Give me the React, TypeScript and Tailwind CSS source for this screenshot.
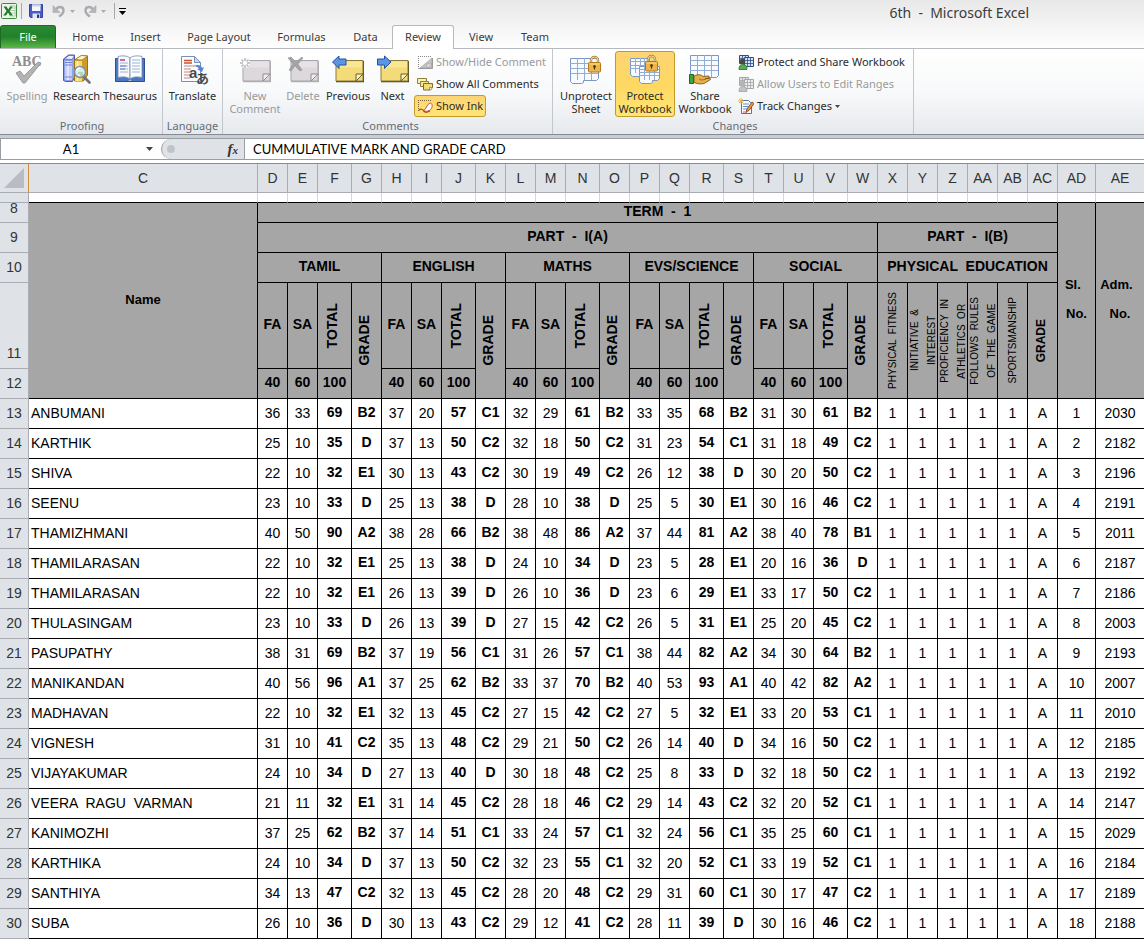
import React from 'react';

const BIG_TEXT = 'text-[11px] leading-[13px]';

// ---------- icons ----------

function ExcelLogo() {
  return (
    <svg width="16" height="16" viewBox="0 0 16 16">
      <rect x="0.5" y="0.5" width="15" height="15" rx="1" fill="#eaf5e6" stroke="#3c8a3f" />
      <path d="M9 3h5v10H9z" fill="#fff" stroke="#8fc08a" strokeWidth="0.7" />
      <path d="M10 5h4M10 7.500h4M10 10h4" stroke="#8fc08a" strokeWidth="0.8" />
      <path d="M2.500 3.500h3l1.800 3 1.900-3h2.600L8.600 8l3.400 4.600H9L7 9.400l-2 3.200H2.200L5.600 8z" fill="#1f7a2c" />
    </svg>
  );
}

function SaveIcon() {
  return (
    <svg width="16" height="16" viewBox="0 0 16 16">
      <path d="M1.500 1.500h13v13h-12l-1-1z" fill="#4a5cc4" stroke="#34439c" />
      <path d="M4 1.500h8.500V8H4z" fill="#f4f6fc" />
      <path d="M4 1.500h8.500v2H4z" fill="#c9d2f0" />
      <path d="M4.500 10.500h7.500V15H4.500z" fill="#dfe4f2" />
      <path d="M9 11.500h2.200V15H9z" fill="#2c3a8c" />
    </svg>
  );
}

function UndoIcon({ flip = false }: { flip?: boolean }) {
  return (
    <svg width="14" height="14" viewBox="0 0 14 14" className={flip ? '-scale-x-100' : ''}>
      <path d="M4 5.500C6 2 11.500 2 11.500 6.500c0 2.500-2 4.500-4.500 6" fill="none" stroke="#a9abaf" strokeWidth="2.400" />
      <path d="M1 1.500v7h7z" fill="#b4b6ba" stroke="#a0a2a6" strokeWidth="0.500" />
    </svg>
  );
}

function Caret({ className = 'text-[#444]' }: { className?: string }) {
  return (
    <svg width="7" height="4" viewBox="0 0 7 4" className={className}>
      <path d="M0 0h7L3.500 4z" fill="currentColor" />
    </svg>
  );
}

function SpellingIcon() {
  return (
    <svg width="32" height="32" viewBox="0 0 32 32">
      <text x="1" y="12" fontFamily="Liberation Serif, serif" fontWeight="bold" fontSize="14" fill="#8e8e8e">ABC</text>
      <path d="M5 19l4-2 4 5L27 8l3 1-16 20h-2z" fill="#b3b3b3" stroke="#8d8d8d" strokeWidth="0.8" />
    </svg>
  );
}

function ResearchIcon() {
  return (
    <svg width="32" height="32" viewBox="0 0 32 32">
      <path d="M2.500 5l5-4h6v22l-2 4.500h-7l-2-1z" fill="#8fa2ea" stroke="#4a5bb0" />
      <path d="M4 7h7v19H5l-1-1z" fill="#c5cff8" />
      <path d="M7 7v19" stroke="#e9edfd" strokeWidth="1.500" />
      <path d="M4 8.500h7M4 11h7M4 23h7" stroke="#5d6fc4" strokeWidth="0.8" />
      <path d="M3 5l5-3.500h5.500L11 5.500z" fill="#f2f4fd" stroke="#4a5bb0" strokeWidth="0.7" />
      <path d="M13.500 6l7-4.500 6 0.500v19l-4 6h-9z" fill="#cf9c25" stroke="#9a7218" />
      <path d="M14 7h7v20h-7z" fill="#f6d873" />
      <path d="M16.500 7v20" stroke="#fdf0b8" strokeWidth="1.500" />
      <path d="M14 5.500l6.500-4 6 0.500-5.500 4z" fill="#fff6d2" stroke="#9a7218" strokeWidth="0.7" />
      <path d="M22.500 22.500l6 6" stroke="#6f7379" strokeWidth="2.600" strokeLinecap="round" />
      <circle cx="19" cy="18" r="5.500" fill="#d8ecf6" stroke="#7d929e" strokeWidth="1.500" />
      <path d="M15.500 17a4 4 0 0 1 3.500-3" stroke="#fff" strokeWidth="1.500" fill="none" />
      <path d="M17 19h5M19 21h3" stroke="#8fbf7a" strokeWidth="1" />
    </svg>
  );
}

function ThesaurusIcon() {
  return (
    <svg width="32" height="32" viewBox="0 0 32 32">
      <path d="M1.500 4.500h29v23h-29z" fill="#4a78c4" stroke="#2b4f92" />
      <path d="M4 2.500c4-1 9-1 12 1.500v21c-3-2.500-8-2.500-12-1.500z" fill="#f7f9fd" stroke="#7287ad" strokeWidth="0.8" />
      <path d="M28 2.500c-4-1-9-1-12 1.500v21c3-2.500 8-2.500 12-1.500z" fill="#fdfefe" stroke="#7287ad" strokeWidth="0.8" />
      <path d="M6 6h5" stroke="#c2347c" strokeWidth="1.500" />
      <path d="M6 9h8M6 12h8M6 15h8M6 18h8M18 6h8M18 9h8M18 12h8M18 15h8M18 18h8" stroke="#9db0d6" strokeWidth="1" />
      <path d="M6 12h6M6 15h5" stroke="#5e7cbc" strokeWidth="1" />
      <path d="M13 27l3-2 3 2z" fill="#dfe6f3" stroke="#2b4f92" strokeWidth="0.6" />
    </svg>
  );
}

function TranslateIcon() {
  return (
    <svg width="32" height="32" viewBox="0 0 32 32">
      <path d="M4.500 2.500h13l6 6v19h-19z" fill="#fbfcff" stroke="#7c8db8" />
      <path d="M17.500 2.500v6h6z" fill="#cdd8f0" stroke="#7c8db8" />
      <path d="M7 6.500h8M7 9h8" stroke="#c9512c" strokeWidth="1.500" />
      <path d="M7 12h11M7 15h7M7 18h6M7 21h6M7 24h6" stroke="#c28a79" strokeWidth="1" />
      <path d="M17 12c4-2 7-1 8 2l2-1-2 5-5-3 2-0.500c-1-1.500-2-2-5-2.500z" fill="#4f82d8" />
      <text x="12" y="24" fontFamily="Liberation Sans, sans-serif" fontWeight="bold" fontSize="15" fill="#4b4b4b">a</text>
      <text x="19" y="29" fontFamily="Noto Sans CJK JP, sans-serif" fontWeight="bold" fontSize="13" fill="#4b4b4b">あ</text>
    </svg>
  );
}

type NoteKind = 'new' | 'delete' | 'previous' | 'next';

function NoteIcon({ kind }: { kind: NoteKind }) {
  const muted = kind === 'new' || kind === 'delete';
  return (
    <svg width="32" height="32" viewBox="0 0 32 32">
      <path d="M4 27.500h27.500V7" fill="none" stroke={muted ? '#b5b2b5' : '#403a20'} strokeWidth="1.500" />
      <path d="M4 6.500h27v20.500H4z" fill={muted ? '#dcd8dc' : '#f3dc78'} stroke={muted ? '#a9a6a9' : '#8b7a35'} />
      <path d="M5 7.500h25v6H5z" fill={muted ? '#e6e3e6' : '#f9e796'} />
      <path d="M24 27v-7h7z" fill={muted ? '#f1eff1' : '#fbf2c0'} stroke={muted ? '#8f8d8f' : '#6b5e2a'} />
      {kind === 'new' && (
        <>
          <circle cx="6" cy="9" r="5" fill="#fff" />
          <path d="M6 4v3M6 11v3M1 9h3M8 9h3M2.500 5.500l2 2M9.500 5.500l-2 2M2.500 12.500l2-2M9.500 12.500l-2-2" stroke="#b7b7b7" strokeWidth="1.500" />
        </>
      )}
      {kind === 'delete' && (
        <path d="M1 4l3-1 5 5 6-5 1 1-5 6 4 6-2 1-5-5-4 5-2-1 4-6z" fill="#a3a3a3" stroke="#8c8c8c" strokeWidth="0.5" />
      )}
      {kind === 'previous' && (
        <path d="M0.500 8L7 2v3h7v6H7v3.500z" fill="#5c94e6" stroke="#24529c" />
      )}
      {kind === 'next' && (
        <path d="M14 8L7.500 2v3h-7v6h7v3.500z" fill="#5c94e6" stroke="#24529c" />
      )}
    </svg>
  );
}

function ShowHideIcon() {
  return (
    <svg width="16" height="14" viewBox="0 0 16 14">
      <path d="M1 1.500h14M1.500 1v12" stroke="#8a8a8a" strokeDasharray="1 1" />
      <path d="M3 13L15 3v10z" fill="#c4c4c4" stroke="#9a9a9a" strokeWidth="0.6" />
      <path d="M10 13v-4h5z" fill="#ededed" stroke="#9a9a9a" strokeWidth="0.6" />
      <path d="M1 13.500h14.500V3" stroke="#888" fill="none" strokeWidth="0.8" />
    </svg>
  );
}

function ShowAllIcon() {
  return (
    <svg width="16" height="14" viewBox="0 0 16 14">
      <path d="M0.500 1.500h9v5h-9z" fill="#fbf0b0" stroke="#8f7e3c" />
      <path d="M3.500 4.500h8v5h-8z" fill="#f8e690" stroke="#8f7e3c" />
      <path d="M6.500 6.500h9v4l-2 2.500h-7z" fill="#f3dc78" stroke="#7d6c2c" />
      <path d="M12.500 13v-2.500h3" fill="#fff" stroke="#7d6c2c" strokeWidth="0.7" />
    </svg>
  );
}

function InkIcon() {
  return (
    <svg width="16" height="14" viewBox="0 0 16 14">
      <path d="M1 1.500h14M1.500 1v12" stroke="#7a6530" strokeDasharray="1 1" />
      <path d="M6 12c3-1 4-7 7-8 2.500 0 3 4 0.500 6.500C12 12.500 9 12.500 6 12z" fill="#fff" stroke="#c8553a" strokeWidth="1" />
      <path d="M2 11.500c1-2 4-1.500 5 0.500s4 1.500 6-0.500" stroke="#c0392b" fill="none" strokeWidth="1.200" />
    </svg>
  );
}

function SheetGrid({ x, y, w = 28, h = 20 }: { x: number; y: number; w?: number; h?: number }) {
  const cols = [1, 2, 3].map((i) => x + Math.round((w * i) / 4) + 0.5);
  const rows = [1, 2, 3].map((i) => y + Math.round((h * i) / 4) + 0.5);
  return (
    <g>
      <path
        d={`M${x + 0.5} ${y + 0.5}h${w}v${h}l-2 2h-${w - 15}v2l-2 1h-9l-2-2z`}
        fill="#f7faff"
        stroke="#7c96c4"
      />
      {cols.map((c) => (
        <path key={c} d={`M${c} ${y}v${h + 2}`} stroke="#93acd6" />
      ))}
      {rows.map((r) => (
        <path key={r} d={`M${x} ${r}h${w}`} stroke="#93acd6" />
      ))}
    </g>
  );
}

function Lock({ x, y }: { x: number; y: number }) {
  return (
    <g transform={`translate(${x} ${y})`}>
      <path d="M3 7V4.500a3.500 3.500 0 0 1 7 0V7" fill="none" stroke="#a8823a" strokeWidth="2.400" />
      <path d="M3 7V4.500a3.500 3.500 0 0 1 7 0V7" fill="none" stroke="#f4dfa2" strokeWidth="1" />
      <rect x="0.5" y="6.500" width="12" height="9.500" rx="1" fill="#eeb548" stroke="#b07a1c" />
      <path d="M1.500 8h10" stroke="#fbdc90" />
      <path d="M6.500 9.500v4" stroke="#4a3208" strokeWidth="1.200" />
      <circle cx="6.500" cy="10.500" r="1.300" fill="#4a3208" />
    </g>
  );
}

function UnprotectIcon() {
  return (
    <svg width="32" height="32" viewBox="0 0 32 32">
      <SheetGrid x={0} y={4} />
      <Lock x={18} y={2} />
    </svg>
  );
}

function ProtectIcon() {
  return (
    <svg width="32" height="32" viewBox="0 0 32 32">
      <SheetGrid x={1} y={4} w={19} h={13} />
      <SheetGrid x={10} y={12} w={20} h={12} />
      <Lock x={16} y={1} />
    </svg>
  );
}

function ShareIcon() {
  return (
    <svg width="32" height="32" viewBox="0 0 32 32">
      <SheetGrid x={1} y={1} w={28} h={20} />
      <path d="M0.500 20.500h4v9h-4z" fill="#3fa53a" stroke="#1f6d1c" />
      <path d="M5 22c4-2 7-1.500 9 0.500l5-0.500c2 0 1.500 2 0 2.200l-3 0.500 5-0.500c1 0.500 0.500 1.800-1 2.300L15 29.500c-4 1-7 0-10-1z" fill="#e5b04c" stroke="#85570f" strokeWidth="0.9" />
      <path d="M10 25c2 1.500 4 1 7 0" stroke="#85570f" strokeWidth="0.7" fill="none" />
    </svg>
  );
}

function ProtectShareIcon({ muted = false }: { muted?: boolean }) {
  const line = muted ? '#a5a5a5' : '#2f4f88';
  return (
    <svg width="16" height="16" viewBox="0 0 16 16">
      <path d="M1.500 1.500h9v8h-9z" fill={muted ? '#e2e2e2' : '#cfe0f6'} stroke={line} />
      <path d="M1.500 4.500h9M4.500 1.500v8M7.500 1.500v8" stroke={line} strokeWidth="0.8" />
      <path d="M6.500 3.500h9v9h-9z" fill={muted ? '#ededed' : '#d5e5f8'} stroke={line} />
      <path d="M6.500 6.500h9M6.500 9.500h9M9.500 3.500v9M12.500 3.500v9" stroke={line} strokeWidth="0.8" />
      <circle cx="4.500" cy="7.500" r="2.800" fill={muted ? '#b5b5b5' : '#4a4a4a'} />
      <path d="M1 15.500c0-4 1.500-5 4-5s4 1.500 4 5z" fill={muted ? '#c4c4c4' : '#59ab4f'} stroke={muted ? '#a0a0a0' : '#2b6b28'} strokeWidth="0.8" />
    </svg>
  );
}

function TrackIcon() {
  return (
    <svg width="16" height="16" viewBox="0 0 16 16">
      <path d="M3.500 2.500h7l3 3v10h-10z" fill="#fbfcff" stroke="#5c6f9c" />
      <path d="M5 6h6M5 8.500h6M5 11h4" stroke="#5c7fc0" strokeWidth="0.9" />
      <path d="M8 14l1-3 5-7 2 1.500-5 7z" fill="#e49a3c" stroke="#7a3a1a" strokeWidth="0.8" />
      <path d="M5 14.500c2-2 2 1.500 4 0" stroke="#c0392b" fill="none" />
      <path d="M3 0v6M0 3h6M1 1l4 4M5 1L1 5" stroke="#e8b92c" strokeWidth="0.9" />
    </svg>
  );
}

// ---------- ribbon ----------

interface BigButtonProps {
  icon: React.ReactNode;
  label: React.ReactNode;
  width: string;
  disabled?: boolean;
  active?: boolean;
}

function BigButton({ icon, label, width, disabled, active }: BigButtonProps) {
  return (
    <button
      disabled={disabled}
      className={`flex h-[66px] shrink-0 flex-col items-center gap-[3px] rounded-[3px] border pt-[2px] ${width} ${BIG_TEXT} ${
        active ? 'border-[#c29b29] bg-linear-to-b from-[#fcd475] via-[#fdd860] to-[#ffe575]' : 'border-transparent'
      } ${disabled ? 'text-[#9a9a9a]' : 'text-[#2b2b2b]'}`}
    >
      {icon}
      <span className="whitespace-nowrap text-center">{label}</span>
    </button>
  );
}

interface SmallButtonProps {
  icon: React.ReactNode;
  label: string;
  disabled?: boolean;
  active?: boolean;
  menu?: boolean;
}

function SmallButton({ icon, label, disabled, active, menu }: SmallButtonProps) {
  return (
    <button
      disabled={disabled}
      className={`flex h-[22px] items-center gap-[3px] whitespace-nowrap rounded-[3px] border px-[2px] text-[11px] ${
        active ? 'border-[#c29b29] bg-linear-to-b from-[#fcd475] to-[#ffe575]' : 'border-transparent'
      } ${disabled ? 'text-[#9a9a9a]' : 'text-[#2b2b2b]'}`}
    >
      {icon}
      <span>{label}</span>
      {menu && <Caret className="h-[3px] w-[5px] text-[#444]" />}
    </button>
  );
}

function Group({ title, className, children }: { title: string; className: string; children: React.ReactNode }) {
  return (
    <section className={`flex shrink-0 flex-col border-r border-[#c3c7cd] pt-[2px] ${className}`}>
      <div className="flex">{children}</div>
      <h2 className="text-center text-[11px] leading-[17px] text-[#666c75]">{title}</h2>
    </section>
  );
}

const TABS = [
  { name: 'Home', width: 'w-[58px]' },
  { name: 'Insert', width: 'w-[57px]' },
  { name: 'Page Layout', width: 'w-[90px]' },
  { name: 'Formulas', width: 'w-[75px]' },
  { name: 'Data', width: 'w-[53px]' },
  { name: 'Review', width: 'w-[62px]' },
  { name: 'View', width: 'w-[54px]' },
  { name: 'Team', width: 'w-[54px]' },
];

function TitleBar() {
  return (
    <header className="flex h-[25px] items-center pb-[3px] pl-[1px]">
      <ExcelLogo />
      <span className="ml-1 h-4 w-px bg-[#a5a7aa]" />
      <button aria-label="Save" className="ml-[6px]"><SaveIcon /></button>
      <button aria-label="Undo" className="ml-2"><UndoIcon /></button>
      <button aria-label="Undo list" className="ml-1"><Caret className="h-[3px] w-[5px] text-[#a9abae]" /></button>
      <button aria-label="Redo" className="ml-2"><UndoIcon flip /></button>
      <button aria-label="Redo list" className="ml-1"><Caret className="h-[3px] w-[5px] text-[#a9abae]" /></button>
      <span className="ml-2 h-4 w-px bg-[#a5a7aa]" />
      <button aria-label="Customize Quick Access Toolbar" className="ml-1 flex flex-col items-center gap-[2px]">
        <span className="h-px w-[7px] bg-black" />
        <Caret className="text-black" />
      </button>
      <h1 className="mr-[115px] ml-auto pt-[3px] text-[14px] whitespace-pre text-[#3b3b3b]">6th  -  Microsoft Excel</h1>
    </header>
  );
}

function Tabs() {
  return (
    <nav className="flex h-6 items-stretch border-b border-[#b6b9bd] text-[11px] text-[#3b3b3b]">
      <button className="mr-[3px] w-14 rounded-t-[3px] border border-b-0 border-[#1d6a22] bg-linear-to-b from-[#2b8a35] via-[#21822a] to-[#5cb847] text-white">
        File
      </button>
      {TABS.map((tab) => (
        <button
          key={tab.name}
          className={`${tab.width} ${
            tab.name === 'Review' ? '-mb-px rounded-t-[3px] border border-b-0 border-[#b6b9bd] bg-white' : 'pt-[2px]'
          }`}
        >
          {tab.name}
        </button>
      ))}
    </nav>
  );
}

function Ribbon() {
  return (
    <div className="flex h-[86px] overflow-hidden border-b border-[#868b94] bg-linear-to-b from-white via-[#f8f9fa] to-[#e6e9ed]">
      <Group title="Proofing" className="w-[163px] pl-[2px]">
        <BigButton icon={<SpellingIcon />} label="Spelling" width="w-[50px]" disabled />
        <BigButton icon={<ResearchIcon />} label="Research" width="w-[49px]" />
        <BigButton icon={<ThesaurusIcon />} label="Thesaurus" width="w-[58px]" />
      </Group>
      <Group title="Language" className="w-[60px]">
        <BigButton icon={<TranslateIcon />} label="Translate" width="w-[59px]" />
      </Group>
      <Group title="Comments" className="w-[330px] pl-[6px]">
        <BigButton icon={<NoteIcon kind="new" />} label={<>New<br />Comment</>} width="w-[52px]" disabled />
        <BigButton icon={<NoteIcon kind="delete" />} label="Delete" width="w-[44px]" disabled />
        <BigButton icon={<NoteIcon kind="previous" />} label="Previous" width="w-[46px]" />
        <BigButton icon={<NoteIcon kind="next" />} label="Next" width="w-[43px]" />
        <div className="flex flex-col items-start">
          <SmallButton icon={<ShowHideIcon />} label="Show/Hide Comment" disabled />
          <SmallButton icon={<ShowAllIcon />} label="Show All Comments" />
          <SmallButton icon={<InkIcon />} label="Show Ink" active />
        </div>
      </Group>
      <Group title="Changes" className="w-[361px] pl-1">
        <BigButton icon={<UnprotectIcon />} label={<>Unprotect<br />Sheet</>} width="w-[58px]" />
        <BigButton icon={<ProtectIcon />} label={<>Protect<br />Workbook</>} width="w-[60px]" active />
        <BigButton icon={<ShareIcon />} label={<>Share<br />Workbook</>} width="w-[60px]" />
        <div className="flex flex-col items-start">
          <SmallButton icon={<ProtectShareIcon />} label="Protect and Share Workbook" />
          <SmallButton icon={<ProtectShareIcon muted />} label="Allow Users to Edit Ranges" disabled />
          <SmallButton icon={<TrackIcon />} label="Track Changes" menu />
        </div>
      </Group>
    </div>
  );
}

function FormulaBar() {
  return (
    <div className="border-b border-[#868b94] bg-white pb-[3px]">
      <div className="flex h-[25px] border-t-[3px] border-b border-t-[#c9cdd4] border-b-[#9a9ea5] bg-[#dfe3e8]">
        <div className="flex w-[161px] items-center border-t border-l border-[#9a9ea5] bg-white">
          <input aria-label="Name Box" defaultValue="A1" className="w-[140px] bg-transparent text-center font-['Lato',sans-serif] text-[13px] leading-5 text-black outline-none" />
          <button aria-label="Name list" className="ml-[5px]"><Caret /></button>
        </div>
        <div className="flex flex-1 items-center border-t border-[#9a9ea5] bg-white">
          <div className="flex h-full w-[83px] items-center justify-between rounded-l-full border-l border-[#9a9ea5] bg-[#dfe3e8] pr-[6px] pl-[5px]">
            <span className="size-2 rounded-full bg-[#c0c4ca]" />
            <button aria-label="Insert Function" className="font-['Liberation_Serif',serif] text-[15px] leading-5 font-bold text-[#333] italic">
              f<span className="text-[11px]">x</span>
            </button>
          </div>
          <input
            aria-label="Formula"
            defaultValue="CUMMULATIVE MARK AND GRADE CARD"
            className="h-full flex-1 border-l border-[#9a9ea5] bg-white pl-2 font-['Lato',sans-serif] text-[13px] text-black outline-none"
          />
        </div>
      </div>
    </div>
  );
}

// ---------- sheet ----------

const COLUMNS = [
  'C', 'D', 'E', 'F', 'G', 'H', 'I', 'J', 'K', 'L', 'M', 'N', 'O', 'P', 'Q', 'R', 'S', 'T', 'U', 'V', 'W',
  'X', 'Y', 'Z', 'AA', 'AB', 'AC', 'AD', 'AE',
];

const SUBJECTS = ['TAMIL', 'ENGLISH', 'MATHS', 'EVS/SCIENCE', 'SOCIAL'];

const ACTIVITIES = [
  'PHYSICAL  FITNESS',
  'INITIATIVE  &\nINTEREST',
  'PROFICIENCY  IN\nATHLETICS  OR',
  'FOLLOWS  RULES\nOF  THE  GAME',
  'SPORTSMANSHIP',
];

// name | FA SA TOTAL GRADE for each subject | admission number
const STUDENTS = [
  ['ANBUMANI', '36 33 69 B2 37 20 57 C1 32 29 61 B2 33 35 68 B2 31 30 61 B2', '2030'],
  ['KARTHIK', '25 10 35 D 37 13 50 C2 32 18 50 C2 31 23 54 C1 31 18 49 C2', '2182'],
  ['SHIVA', '22 10 32 E1 30 13 43 C2 30 19 49 C2 26 12 38 D 30 20 50 C2', '2196'],
  ['SEENU', '23 10 33 D 25 13 38 D 28 10 38 D 25 5 30 E1 30 16 46 C2', '2191'],
  ['THAMIZHMANI', '40 50 90 A2 38 28 66 B2 38 48 86 A2 37 44 81 A2 38 40 78 B1', '2011'],
  ['THAMILARASAN', '22 10 32 E1 25 13 38 D 24 10 34 D 23 5 28 E1 20 16 36 D', '2187'],
  ['THAMILARASAN', '22 10 32 E1 26 13 39 D 26 10 36 D 23 6 29 E1 33 17 50 C2', '2186'],
  ['THULASINGAM', '23 10 33 D 26 13 39 D 27 15 42 C2 26 5 31 E1 25 20 45 C2', '2003'],
  ['PASUPATHY', '38 31 69 B2 37 19 56 C1 31 26 57 C1 38 44 82 A2 34 30 64 B2', '2193'],
  ['MANIKANDAN', '40 56 96 A1 37 25 62 B2 33 37 70 B2 40 53 93 A1 40 42 82 A2', '2007'],
  ['MADHAVAN', '22 10 32 E1 32 13 45 C2 27 15 42 C2 27 5 32 E1 33 20 53 C1', '2010'],
  ['VIGNESH', '31 10 41 C2 35 13 48 C2 29 21 50 C2 26 14 40 D 34 16 50 C2', '2185'],
  ['VIJAYAKUMAR', '24 10 34 D 27 13 40 D 30 18 48 C2 25 8 33 D 32 18 50 C2', '2192'],
  ['VEERA  RAGU  VARMAN', '21 11 32 E1 31 14 45 C2 28 18 46 C2 29 14 43 C2 32 20 52 C1', '2147'],
  ['KANIMOZHI', '37 25 62 B2 37 14 51 C1 33 24 57 C1 32 24 56 C1 35 25 60 C1', '2029'],
  ['KARTHIKA', '24 10 34 D 37 13 50 C2 32 23 55 C1 32 20 52 C1 33 19 52 C1', '2184'],
  ['SANTHIYA', '34 13 47 C2 32 13 45 C2 28 20 48 C2 29 31 60 C1 30 17 47 C2', '2189'],
  ['SUBA', '26 10 36 D 30 13 43 C2 29 12 41 C2 28 11 39 D 30 16 46 C2', '2188'],
];

const CELL = 'border-r border-b border-black';
const HEAD = `${CELL} bg-[#a6a6a6] font-bold whitespace-pre`;

function RowNumber({ n }: { n?: number }) {
  return (
    <th
      scope="row"
      className={`border-r border-b border-[#a9adb3] bg-[#dfe3e8] font-normal text-[#333] ${
        n === 8 ? 'align-top leading-[10px]' : n ? 'pb-[5px] align-bottom' : ''
      }`}
    >
      {n}
    </th>
  );
}

function Vertical({ children, className = '' }: { children: React.ReactNode; className?: string }) {
  return (
    <span className={`inline-block rotate-180 text-center align-middle whitespace-pre [writing-mode:vertical-rl] ${className}`}>
      {children}
    </span>
  );
}

function Sheet() {
  return (
    <table className="w-full table-fixed border-separate border-spacing-0 font-['Liberation_Sans',Arial,sans-serif] text-[14px] leading-5 text-black">
      <colgroup>
        <col className="w-[29px]" />
        <col className="w-[229px]" />
        {SUBJECTS.map((s) => (
          <React.Fragment key={s}>
            <col className="w-[30px]" />
            <col className="w-[30px]" />
            <col className="w-[34px]" />
            <col className="w-[30px]" />
          </React.Fragment>
        ))}
        <col span={6} className="w-[30px]" />
        <col className="w-[38px]" />
        <col />
      </colgroup>
      <thead>
        <tr className="h-[29px]">
          <th aria-label="Select all" className="border-r border-b border-r-[#d08f3a] border-b-[#a9adb3] bg-[#dfe3e8] px-1">
            <svg width="20" height="20" viewBox="0 0 20 20" className="block">
              <path d="M20 0v20H0z" fill="#b9bdc3" />
            </svg>
          </th>
          {COLUMNS.map((c) => (
            <th key={c} scope="col" className="border-r border-b border-[#a9adb3] bg-[#dfe3e8] font-normal text-[#333] last:border-r-0">
              {c}
            </th>
          ))}
        </tr>
      </thead>
      <tbody className="text-center">
        <tr className="h-[10px]">
          <RowNumber />
          {COLUMNS.map((c) => (
            <td key={c} className="border-r border-b border-r-[#d3d7de] border-b-black last:border-r-0" />
          ))}
        </tr>
        <tr className="h-5">
          <RowNumber n={8} />
          <th rowSpan={5} className={`${HEAD} pb-[2px] text-[13px]`}>Name</th>
          <th colSpan={26} className={`${HEAD} pb-[3px] leading-4`}>TERM  -  1</th>
          <th rowSpan={5} className={`${HEAD} pb-[3px] text-[13px] leading-[29px]`}>{'Sl.  \nNo.'}</th>
          <th rowSpan={5} className={`${HEAD} border-r-0 pb-[3px] text-[13px] leading-[29px]`}>{'Adm.  \nNo.'}</th>
        </tr>
        <tr className="h-[30px]">
          <RowNumber n={9} />
          <th colSpan={20} className={`${HEAD} pb-[3px]`}>PART  -  I(A)</th>
          <th colSpan={6} className={`${HEAD} pb-[3px]`}>PART  -  I(B)</th>
        </tr>
        <tr className="h-[30px]">
          <RowNumber n={10} />
          {SUBJECTS.map((s) => (
            <th key={s} colSpan={4} className={`${HEAD} pb-[3px]`}>{s}</th>
          ))}
          <th colSpan={6} className={`${HEAD} pb-[3px]`}>PHYSICAL  EDUCATION</th>
        </tr>
        <tr className="h-[86px]">
          <RowNumber n={11} />
          {SUBJECTS.map((s) => (
            <React.Fragment key={s}>
              <th className={`${HEAD} pb-[3px]`}>FA</th>
              <th className={`${HEAD} pb-[3px]`}>SA</th>
              <th className={`${HEAD} pr-[6px]`}><Vertical>TOTAL</Vertical></th>
              <th rowSpan={2} className={`${HEAD} pr-[6px]`}><Vertical>GRADE</Vertical></th>
            </React.Fragment>
          ))}
          {ACTIVITIES.map((a) => (
            <th key={a} rowSpan={2} className={HEAD}>
              <Vertical className="-mr-1 -ml-1 text-[10px] leading-[17px] font-normal">{a}</Vertical>
            </th>
          ))}
          <th rowSpan={2} className={`${HEAD} pr-1`}><Vertical className="text-[12px]">GRADE</Vertical></th>
        </tr>
        <tr className="h-[30px]">
          <RowNumber n={12} />
          {SUBJECTS.map((s) => (
            <React.Fragment key={s}>
              <th className={`${HEAD} pb-[3px]`}>40</th>
              <th className={`${HEAD} pb-[3px]`}>60</th>
              <th className={`${HEAD} pb-[3px]`}>100</th>
            </React.Fragment>
          ))}
        </tr>
        {STUDENTS.map(([name, marks, admission], i) => (
          <tr key={admission} className="h-[30px]">
            <RowNumber n={13 + i} />
            <td className={`${CELL} pb-[2px] pl-[2px] text-left whitespace-pre`}>{name}</td>
            {marks.split(' ').map((mark, j) => (
              <td key={j} className={`${CELL} ${j % 4 > 1 ? 'pb-1 font-bold' : 'pb-[2px]'}`}>{mark}</td>
            ))}
            {ACTIVITIES.map((a) => (
              <td key={a} className={`${CELL} pb-[2px]`}>1</td>
            ))}
            <td className={`${CELL} pb-[2px]`}>A</td>
            <td className={`${CELL} pb-[2px]`}>{i + 1}</td>
            <td className={`${CELL} border-r-0 pb-[2px]`}>{admission}</td>
          </tr>
        ))}
      </tbody>
    </table>
  );
}

export default function App() {
  return (
    <div className="overflow-hidden bg-white font-['Noto_Sans','Open_Sans',sans-serif]">
      <div className="bg-linear-to-b from-[#e8e8e8] to-white">
        <TitleBar />
        <Tabs />
      </div>
      <Ribbon />
      <FormulaBar />
      <Sheet />
    </div>
  );
}
